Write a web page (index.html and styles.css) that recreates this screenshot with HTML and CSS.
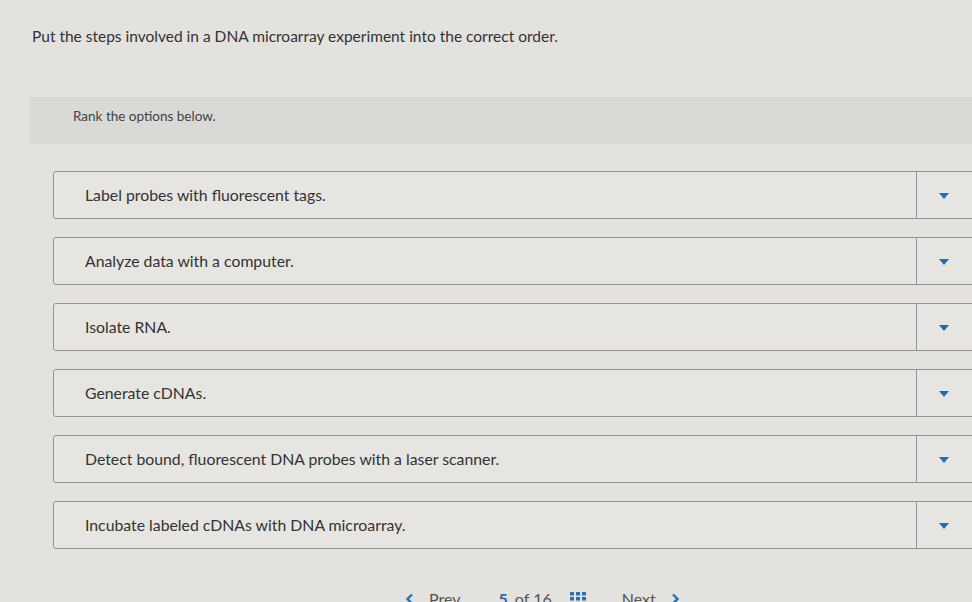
FILE: index.html
```html
<!DOCTYPE html>
<html lang="en">
<head>
  <meta charset="UTF-8">
  <title>Ranking question</title>
  <link rel="stylesheet" href="styles.css">
</head>
<body>

  <p class="pergunta">Put the steps involved in a DNA microarray experiment into the correct order.</p>

  <div class="quadro">
    <div class="instrucao">Rank the options below.</div>

    <div class="lista">
      <div class="opcao">
        <div class="texto">Label probes with fluorescent tags.</div>
        <div class="seletor"><span class="seta"></span></div>
      </div>
      <div class="opcao">
        <div class="texto">Analyze data with a computer.</div>
        <div class="seletor"><span class="seta"></span></div>
      </div>
      <div class="opcao">
        <div class="texto">Isolate RNA.</div>
        <div class="seletor"><span class="seta"></span></div>
      </div>
      <div class="opcao">
        <div class="texto">Generate cDNAs.</div>
        <div class="seletor"><span class="seta"></span></div>
      </div>
      <div class="opcao">
        <div class="texto">Detect bound, fluorescent DNA probes with a laser scanner.</div>
        <div class="seletor"><span class="seta"></span></div>
      </div>
      <div class="opcao">
        <div class="texto">Incubate labeled cDNAs with DNA microarray.</div>
        <div class="seletor"><span class="seta"></span></div>
      </div>
    </div>
  </div>

  <div class="navegacao">
    <span class="nav-link">
      <svg width="10" height="12" viewBox="0 0 10 12"><path d="M7 1.5 L2.5 6 L7 10.5" fill="none" stroke="#2a6fb0" stroke-width="2.4"/></svg>
      Prev
    </span>
    <span class="pagina"><b>5</b> of 16</span>
    <svg class="grade" width="16" height="14" viewBox="0 0 16 14">
      <rect x="0" y="0" width="4" height="3.5" fill="#2a6fb0"/>
      <rect x="6" y="0" width="4" height="3.5" fill="#2a6fb0"/>
      <rect x="12" y="0" width="4" height="3.5" fill="#2a6fb0"/>
      <rect x="0" y="5" width="4" height="3.5" fill="#2a6fb0"/>
      <rect x="6" y="5" width="4" height="3.5" fill="#2a6fb0"/>
      <rect x="12" y="5" width="4" height="3.5" fill="#2a6fb0"/>
      <rect x="0" y="10" width="4" height="3.5" fill="#2a6fb0"/>
      <rect x="6" y="10" width="4" height="3.5" fill="#2a6fb0"/>
      <rect x="12" y="10" width="4" height="3.5" fill="#2a6fb0"/>
    </svg>
    <span class="nav-link">
      Next
      <svg width="10" height="12" viewBox="0 0 10 12"><path d="M3 1.5 L7.5 6 L3 10.5" fill="none" stroke="#2a6fb0" stroke-width="2.4"/></svg>
    </span>
  </div>

</body>
</html>
```

FILE: styles.css
```css
body {
  margin: 0;
  font-family: Lato, "Liberation Sans", sans-serif;
  background-color: #e3e2de;
  color: #3a3a3a;
  overflow: hidden;
  height: 602px;
}

.pergunta {
  margin: 0;
  padding: 27px 0 0 32px;
  font-size: 15.5px;
  color: #333;
}

.quadro {
  margin: 52px 0 0 30px;
}

.instrucao {
  background-color: #d9d9d6;
  padding: 11px 0 20px 43px;
  font-size: 13.5px;
  color: #444;
}

.lista {
  display: flex;
  flex-direction: column;
  gap: 18px;
  padding: 27px 0 0 23px;
  width: 960px;
}

.opcao {
  display: flex;
  height: 46px;
  border: 1px solid #8e9497;
  border-radius: 3px 0 0 3px;
  background-color: #e6e5e1;
}

.texto {
  flex: 1;
  padding: 13px 0 0 31px;
  font-size: 15.8px;
  color: #333;
}

.seletor {
  width: 96px;
  border-left: 1px solid #8e9497;
  padding: 21px 0 0 22px;
  box-sizing: border-box;
}

.seta {
  display: block;
  width: 0;
  height: 0;
  border-left: 5px solid transparent;
  border-right: 5px solid transparent;
  border-top: 6px solid #2a6aa6;
}

.navegacao {
  display: flex;
  align-items: center;
  gap: 18px;
  padding: 40px 0 0 405px;
  font-size: 16px;
  color: #555;
}

.nav-link {
  display: flex;
  align-items: center;
  gap: 14px;
  margin-right: 20px;
}

.nav-link:last-child {
  margin-left: 18px;
}

.pagina b {
  color: #2a6aa6;
  margin-right: 3px;
}
```
